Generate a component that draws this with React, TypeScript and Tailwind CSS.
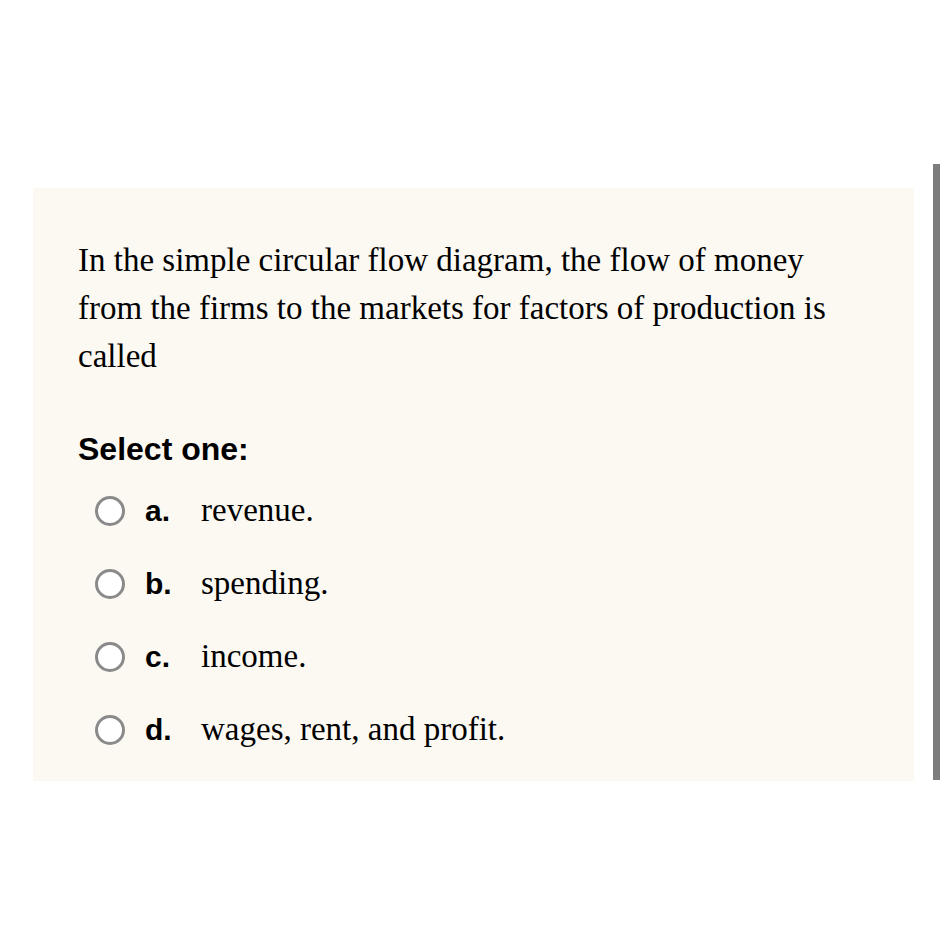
export default function App() {
  const opts = [
    ["a.", "revenue."],
    ["b.", "spending."],
    ["c.", "income."],
    ["d.", "wages, rent, and profit."],
  ];
  return (
    <div className="relative w-[947px] h-[947px] bg-white">
      <div className="absolute left-[933px] top-[164px] w-[7px] h-[616px] bg-[#7d7d7d]" />
      <div className="pt-[188px] pl-[33px]">
        <div className="w-[881px] h-[593px] bg-[#fbf9f2] px-[45px]">
          <div className="pt-[48px]">
            <p className="font-['Liberation_Serif',serif] text-[33px] leading-[48px] text-black whitespace-nowrap">
              In the simple circular flow diagram, the flow of money<br />
              from the firms to the markets for factors of production is<br />
              called
            </p>
            <p className="mt-[51px] font-['Liberation_Sans',sans-serif] font-bold text-[32px] leading-[36px] text-black">
              Select one:
            </p>
            <div className="mt-[7px] flex flex-col">
              {opts.map(([l, t]) => (
                <div key={l} className="flex items-center h-[73px] pl-[17px]">
                  <div className="w-[30px] h-[30px] rounded-full border-[3px] border-[#8a8a8a] bg-white" />
                  <span className="ml-[20px] w-[56px] font-['Liberation_Sans',sans-serif] font-bold text-[30px] text-black">{l}</span>
                  <span className="font-['Liberation_Serif',serif] text-[33px] text-black">{t}</span>
                </div>
              ))}
            </div>
          </div>
        </div>
      </div>
    </div>
  );
}
